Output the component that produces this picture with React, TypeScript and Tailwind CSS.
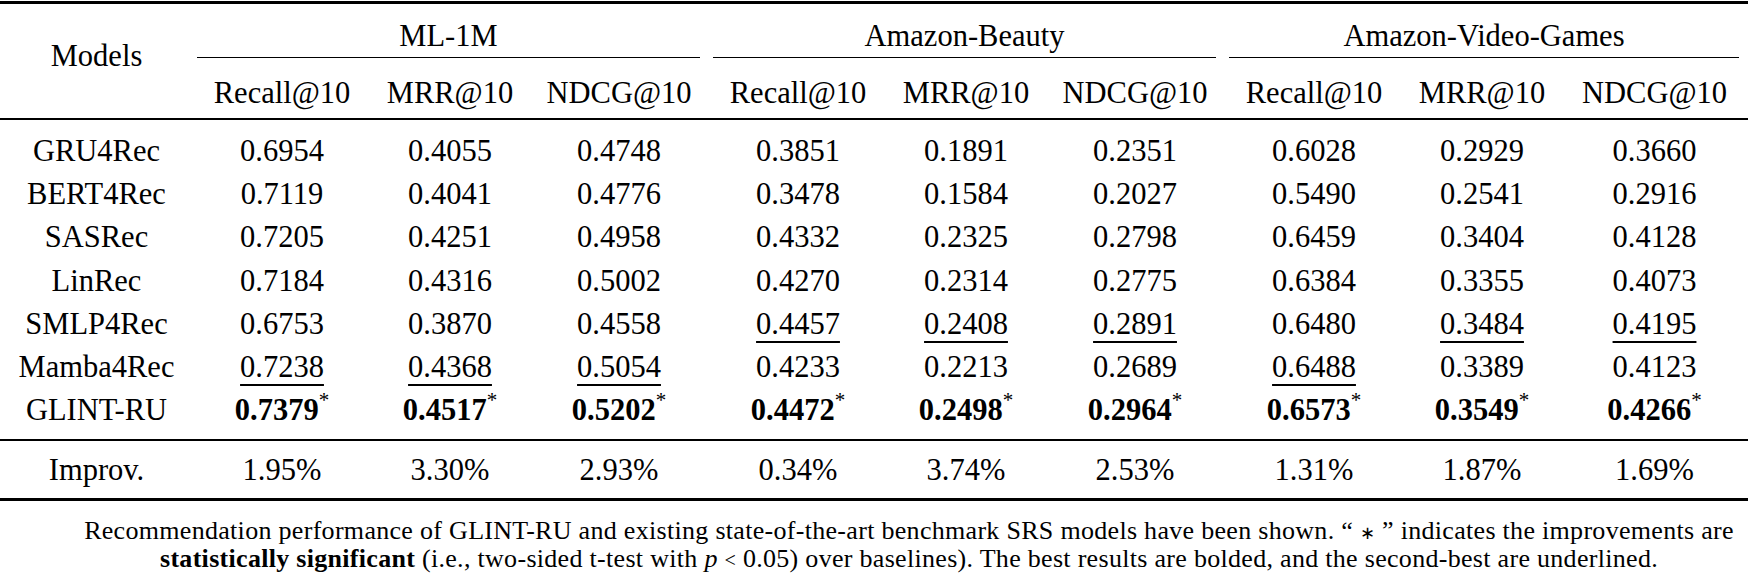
const COLS =
  "grid grid-cols-[193px_178px_158px_180px_178px_158px_180px_178px_158px_187px]";

type Cell = { v: string; u?: boolean; b?: boolean };

const rows: { name: string; cells: Cell[] }[] = [
  {
    name: "GRU4Rec",
    cells: ["0.6954", "0.4055", "0.4748", "0.3851", "0.1891", "0.2351", "0.6028", "0.2929", "0.3660"].map((v) => ({ v })),
  },
  {
    name: "BERT4Rec",
    cells: ["0.7119", "0.4041", "0.4776", "0.3478", "0.1584", "0.2027", "0.5490", "0.2541", "0.2916"].map((v) => ({ v })),
  },
  {
    name: "SASRec",
    cells: ["0.7205", "0.4251", "0.4958", "0.4332", "0.2325", "0.2798", "0.6459", "0.3404", "0.4128"].map((v) => ({ v })),
  },
  {
    name: "LinRec",
    cells: ["0.7184", "0.4316", "0.5002", "0.4270", "0.2314", "0.2775", "0.6384", "0.3355", "0.4073"].map((v) => ({ v })),
  },
  {
    name: "SMLP4Rec",
    cells: [
      { v: "0.6753" },
      { v: "0.3870" },
      { v: "0.4558" },
      { v: "0.4457", u: true },
      { v: "0.2408", u: true },
      { v: "0.2891", u: true },
      { v: "0.6480" },
      { v: "0.3484", u: true },
      { v: "0.4195", u: true },
    ],
  },
  {
    name: "Mamba4Rec",
    cells: [
      { v: "0.7238", u: true },
      { v: "0.4368", u: true },
      { v: "0.5054", u: true },
      { v: "0.4233" },
      { v: "0.2213" },
      { v: "0.2689" },
      { v: "0.6488", u: true },
      { v: "0.3389" },
      { v: "0.4123" },
    ],
  },
  {
    name: "GLINT-RU",
    cells: ["0.7379", "0.4517", "0.5202", "0.4472", "0.2498", "0.2964", "0.6573", "0.3549", "0.4266"].map((v) => ({ v, b: true })),
  },
];

const improv = ["1.95%", "3.30%", "2.93%", "0.34%", "3.74%", "2.53%", "1.31%", "1.87%", "1.69%"];
const datasets = ["ML-1M", "Amazon-Beauty", "Amazon-Video-Games"];
const metrics = ["Recall@10", "MRR@10", "NDCG@10"];

const ValueCell = ({ c }: { c: Cell }) => {
  if (c.b) {
    return (
      <div className="flex items-center justify-center">
        <span className="font-bold">{c.v}</span>
        <sup className="text-[21px] font-normal -top-[0.5em]">*</sup>
      </div>
    );
  }
  return (
    <div className="flex items-center justify-center">
      <span className={c.u ? "underline decoration-[1.5px] underline-offset-[7px]" : ""}>{c.v}</span>
    </div>
  );
};

export default function App() {
  return (
    <div className="w-[1748px] bg-white pt-[1px] text-black font-[Liberation_Serif,Times_New_Roman,serif]">
      <div className="text-[30.5px] leading-[30px]">
        {/* header */}
        <div className={`${COLS} grid-rows-[54px_60px] border-t-[3px] border-b-2 border-black`}>
          <div className="row-span-2 flex items-center justify-center pb-[10px]">Models</div>
          {datasets.map((d) => (
            <div key={d} className="col-span-3 flex items-end">
              <div className="ml-[4px] mr-[9px] flex-1 border-b border-black pb-[6px] text-center">{d}</div>
            </div>
          ))}
          {datasets.map((d) =>
            metrics.map((m) => (
              <div key={d + m} className="flex justify-center pt-[20px]">
                {m}
              </div>
            ))
          )}
        </div>

        {/* body */}
        <div className="border-b-2 border-black pt-[9px] pb-[7px]">
          {rows.map((r) => (
            <div key={r.name} className={`${COLS} h-[43.3px]`}>
              <div className="flex items-center justify-center">{r.name}</div>
              {r.cells.map((c, i) => (
                <ValueCell key={i} c={c} />
              ))}
            </div>
          ))}
        </div>

        {/* improvement */}
        <div className={`${COLS} h-[60px] border-b-[3px] border-black`}>
          <div className="flex items-center justify-center">Improv.</div>
          {improv.map((v, i) => (
            <div key={i} className="flex items-center justify-center">
              {v}
            </div>
          ))}
        </div>
      </div>

      {/* caption */}
      <div className="ml-[70px] mt-[17px] whitespace-nowrap text-center text-[26px] leading-[25px] tracking-[0.3px]">
        <p>
          Recommendation performance of GLINT-RU and existing state-of-the-art benchmark SRS models have been shown. “{" "}
          <span className="text-[18px]">∗</span> ” indicates the improvements are
        </p>
        <p>
          <span className="font-bold">statistically significant</span> (i.e., two-sided t-test with <i>p</i>{" "}
          <span className="text-[20px]">&lt;</span> 0.05) over baselines). The best results are bolded, and the
          second-best are underlined.
        </p>
      </div>
    </div>
  );
}
